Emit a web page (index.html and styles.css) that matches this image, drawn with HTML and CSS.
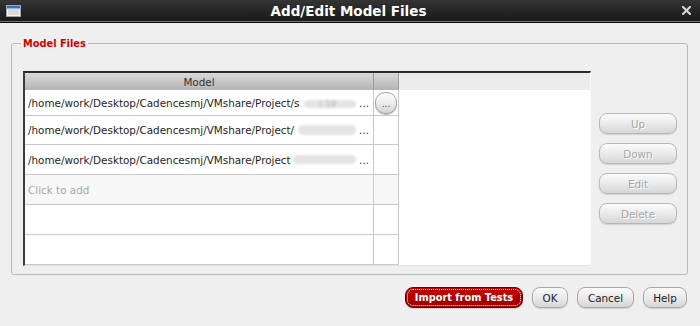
FILE: index.html
```html
<!DOCTYPE html>
<html>
<head>
<meta charset="utf-8">
<link rel="stylesheet" href="styles.css">
</head>
<body>
<div class="window">
  <div class="titlebar">
    <svg class="app-icon" width="15" height="12" viewBox="0 0 15 12">
      <rect x="0.5" y="0.5" width="14" height="11" fill="#f4f4f4" stroke="#9aa4b4"/>
      <rect x="1" y="1" width="13" height="2.5" fill="#3b6fc4"/>
      <rect x="2" y="4" width="11" height="6" fill="#dcdcd4"/>
    </svg>
    <div class="title">Add/Edit Model Files</div>
    <svg class="close" width="9" height="9" viewBox="0 0 9 9">
      <path d="M1 1 L8 8 M8 1 L1 8" stroke="#d4d4d4" stroke-width="2.2" stroke-linecap="square"/>
    </svg>
  </div>
  <div class="titleline"></div>

  <div class="content">
    <div class="group">
      <span class="group-title">Model Files</span>
      <div class="group-body">
        <div class="table">
          <div class="th th-model">Model</div>
          <div class="th th-btn"></div>
          <div class="th th-fill"></div>

          <div class="td td-model r1"><span class="path">/home/work/Desktop/Cadencesmj/VMshare/Project/s</span><span class="blob b1"><span class="ghost">i 19</span></span><span class="dots">...</span></div>
          <div class="td td-btn r1"><span class="browse">...</span></div>
          <div class="fill"></div>

          <div class="td td-model r2"><span class="path">/home/work/Desktop/Cadencesmj/VMshare/Project/</span><span class="blob b2"></span><span class="dots">...</span></div>
          <div class="td td-btn r2"></div>

          <div class="td td-model r3"><span class="path">/home/work/Desktop/Cadencesmj/VMshare/Project</span><span class="blob b3"></span><span class="dots">...</span></div>
          <div class="td td-btn r3"></div>

          <div class="td td-model add">Click to add</div>
          <div class="td td-btn add"></div>

          <div class="td td-model"></div>
          <div class="td td-btn"></div>

          <div class="td td-model"></div>
          <div class="td td-btn"></div>
        </div>
        <div class="side-buttons">
          <button class="btn disabled">Up</button>
          <button class="btn disabled">Down</button>
          <button class="btn disabled">Edit</button>
          <button class="btn disabled">Delete</button>
        </div>
      </div>
    </div>

    <div class="dialog-buttons">
      <button class="btn primary w-import">Import from Tests</button>
      <button class="btn w-ok">OK</button>
      <button class="btn w-cancel">Cancel</button>
      <button class="btn w-help">Help</button>
    </div>
  </div>
</div>
</body>
</html>
```

FILE: styles.css
```css
* { box-sizing: border-box; }
html, body {
  margin: 0;
  padding: 0;
  background: #efefef;
  font-family: "DejaVu Sans", sans-serif;
  font-size: 10.4px;
  color: #222;
}
.window {
  width: 700px;
  height: 326px;
  display: flex;
  flex-direction: column;
  overflow: hidden;
}
.titlebar {
  height: 21px;
  background: linear-gradient(#353535, #232323 60%, #1c1c1c);
  display: flex;
  align-items: center;
  padding: 0 9px 0 6px;
}
.app-icon { flex: none; }
.title {
  flex: 1;
  text-align: center;
  color: #ffffff;
  font-weight: bold;
  font-size: 13.5px;
  padding-right: 6px;
}
.close { flex: none; }
.titleline {
  height: 2px;
  background: linear-gradient(#5f7896 50%, #0a0a0a 50%);
}
.content {
  flex: 1;
  display: flex;
  flex-direction: column;
}
.group {
  margin: 20px 12px 0 11px;
  height: 232px;
  border: 1px solid #b8b8b8;
  border-radius: 3px;
  display: flex;
  flex-direction: column;
  padding: 0 9px 0 11px;
}
.group-title {
  align-self: flex-start;
  margin-top: -7px;
  margin-left: -2px;
  padding: 0 2px;
  background: #efefef;
  color: #d40000;
  font-weight: bold;
  font-size: 9.8px;
  line-height: 13px;
}
.group-body {
  display: flex;
  gap: 8px;
  margin-top: 21px;
}
.table {
  width: 568px;
  height: 195px;
  border-top: 2px solid #2c2c2c;
  border-left: 2px solid #3a3a3a;
  border-right: 1px solid #f8f8f8;
  border-bottom: 1px solid #e2e2e2;
  display: grid;
  grid-template-columns: 349px 25px 1fr;
  grid-template-rows: 17px 26px 29px 30px 30px 30px 30px;
  background: #ffffff;
}
.th {
  background: linear-gradient(#dadada, #b4b4b4);
  border-right: 1px solid #9c9c9c;
  display: flex;
  align-items: center;
  justify-content: center;
  color: #333;
}
.th-fill {
  background: #ececec;
  border-right: none;
}
.td {
  border-right: 1px solid #c9c9c9;
  border-bottom: 1px solid #c9c9c9;
  display: flex;
  align-items: center;
  background: #ffffff;
  min-width: 0;
  overflow: hidden;
  white-space: nowrap;
}
.td-model { padding: 0 4px 0 3px; }
.td-btn { justify-content: center; }
.fill {
  grid-column: 3;
  grid-row: 2 / 8;
  background: #ffffff;
}
.path { flex: none; color: #1e1e1e; }
.blob {
  flex: 1;
  margin: 0 3px 0 4px;
  background: #e4e4e4;
  border-radius: 5px;
  filter: blur(1.2px);
  display: flex;
  align-items: center;
  overflow: hidden;
}
.b1 { height: 8px; margin-top: 2px; }
.b2 { height: 10px; margin-left: 4px; }
.b3 { height: 9px; margin-left: 2px; }
.ghost { color: #b8b8b8; padding-left: 16px; font-size: 9px; }
.dots { flex: none; color: #333; }
.add {
  background: #f7f7f7;
  color: #a8a8a8;
}
.td.add { padding-left: 3px; }
.browse {
  flex: none;
  width: 22px;
  height: 22px;
  border: 1px solid #a2a2a2;
  border-radius: 10px;
  background: linear-gradient(#fdfdfd, #ececec 50%, #d2d2d2);
  box-shadow: 0 1px 0 #c0c0c0;
  font-size: 9px;
  color: #444;
  display: flex;
  align-items: center;
  justify-content: center;
  padding-top: 3px;
}
.side-buttons {
  width: 78px;
  display: flex;
  flex-direction: column;
  gap: 9px;
  padding-top: 42px;
}
.btn {
  height: 21px;
  border: 1px solid #a8a8a8;
  border-radius: 8px;
  background: linear-gradient(#fbfbfb, #ececec 45%, #d6d6d6);
  box-shadow: 0 1px 1px rgba(0,0,0,0.12);
  font-family: "DejaVu Sans", sans-serif;
  font-size: 10.4px;
  color: #222;
  padding: 0;
  margin: 0;
  display: flex;
  align-items: center;
  justify-content: center;
}
.btn.disabled {
  color: #a6a6a6;
  text-shadow: 1px 1px 0 #ffffff;
  border-color: #b8b8b8;
}
.dialog-buttons {
  display: flex;
  justify-content: flex-end;
  gap: 9px;
  margin-top: 12px;
  padding-right: 13px;
}
.primary {
  background: linear-gradient(#c80000, #b00000 50%, #9c0000);
  border-color: #6e0000;
  color: #ffffff;
  font-weight: bold;
  font-size: 9.8px;
  outline: 1px dotted #ffffff;
  outline-offset: -3px;
}
.w-import { width: 118px; }
.w-ok { width: 36px; }
.w-cancel { width: 57px; }
.w-help { width: 44px; }
```
